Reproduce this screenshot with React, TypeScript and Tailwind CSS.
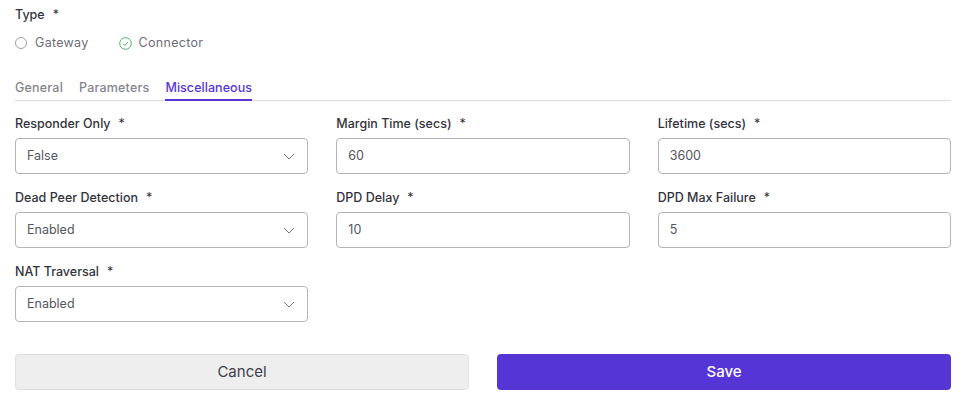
const font = "font-['Inter','Noto_Sans',sans-serif]";

function Label({ text }: { text: string }) {
  return (
    <div className="flex h-[16px] items-center gap-[8px] text-[12.5px] font-medium leading-[16px] text-[#33333d]">
      <span>{text}</span>
      <span className="font-normal">*</span>
    </div>
  );
}

function Chevron() {
  return (
    <svg width="12" height="7" viewBox="0 0 12 7" fill="none" stroke="#77777f" strokeWidth="1">
      <path d="M1 1l5 5 5-5" />
    </svg>
  );
}

function Field({ label, value, select }: { label: string; value: string; select?: boolean }) {
  return (
    <div className="flex flex-col gap-[6px]">
      <Label text={label} />
      <div className="flex h-[36px] items-center justify-between rounded-[4px] border border-[#b4b4ba] bg-white pl-[11px] pr-[12px] text-[12.5px] text-[#55555d]">
        <span>{value}</span>
        {select && <Chevron />}
      </div>
    </div>
  );
}

export default function App() {
  return (
    <div className={`${font} h-[416px] w-[975px] overflow-hidden bg-white pl-[15px] pr-[24px] pt-[7px]`}>
      <Label text="Type" />

      <div className="mt-[12px] flex h-[16px] items-center text-[12.5px] tracking-[0.3px] text-[#6e6e78]">
        <span className="h-[12px] w-[12px] rounded-full border border-[#9d9da5]" />
        <span className="ml-[8px]">Gateway</span>
        <svg className="ml-[30px]" width="13" height="13" viewBox="0 0 13 13" fill="none" stroke="#4caf73" strokeWidth="1">
          <circle cx="6.5" cy="6.5" r="5.8" />
          <path d="M4 6.7l1.8 1.8L9 5" />
        </svg>
        <span className="ml-[7px]">Connector</span>
      </div>

      <div className="mt-[28px] flex h-[22px] gap-[16px] border-b border-[#dcdce0] text-[12.5px] font-medium tracking-[0.2px] text-[#85858d]">
        <span className="leading-[17px]">General</span>
        <span className="leading-[17px]">Parameters</span>
        <span className="h-[22px] border-b-2 border-[#5535d6] leading-[17px] tracking-[0.05px] text-[#5535d6]">Miscellaneous</span>
      </div>

      <div className="mt-[15px] grid grid-cols-3 gap-x-[28px] gap-y-[16px]">
        <Field label="Responder Only" value="False" select />
        <Field label="Margin Time (secs)" value="60" />
        <Field label="Lifetime (secs)" value="3600" />
        <Field label="Dead Peer Detection" value="Enabled" select />
        <Field label="DPD Delay" value="10" />
        <Field label="DPD Max Failure" value="5" />
        <Field label="NAT Traversal" value="Enabled" select />
      </div>

      <div className="mt-[32px] grid grid-cols-2 gap-x-[28px]">
        <button className="h-[36px] rounded-[4px] border border-[#dfdfe2] bg-[#eeeeef] text-[15px] text-[#3f3f47]">Cancel</button>
        <button className="h-[36px] rounded-[4px] bg-[#5535d6] text-[15px] font-medium text-white">Save</button>
      </div>
    </div>
  );
}
